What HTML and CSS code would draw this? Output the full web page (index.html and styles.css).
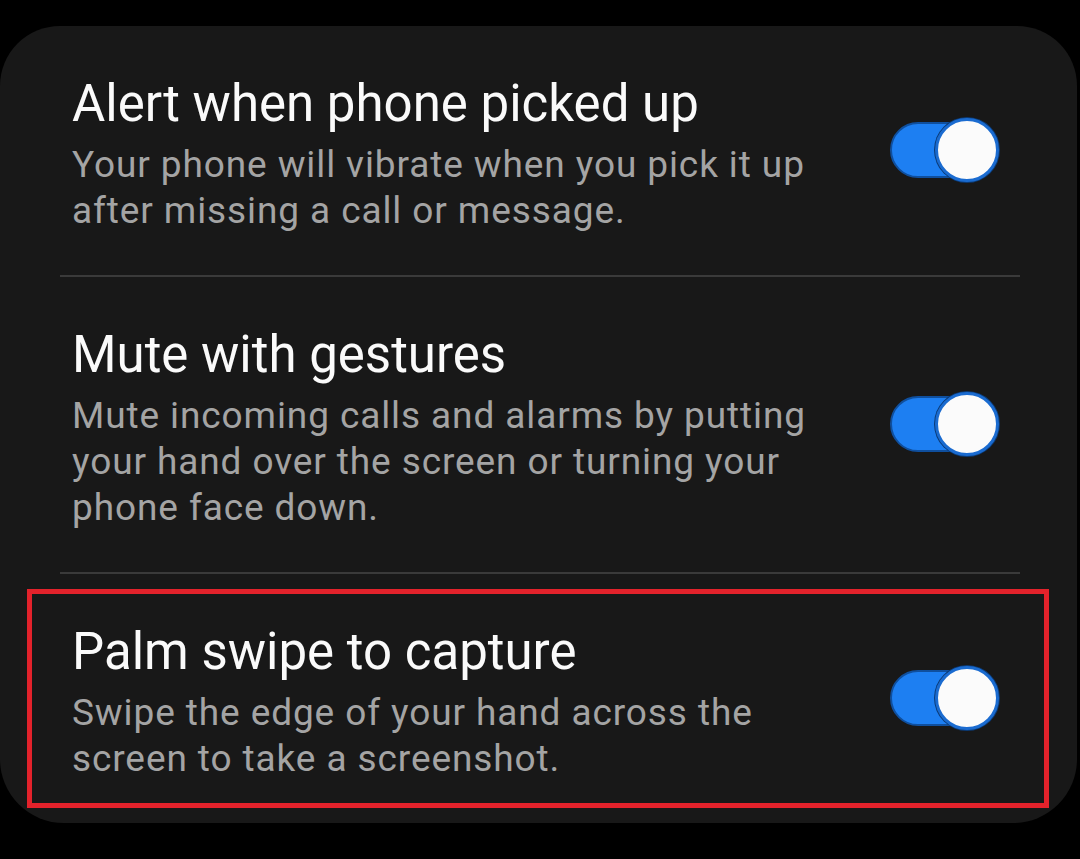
FILE: index.html
```html
<!DOCTYPE html>
<html lang="en">
<head>
<meta charset="utf-8">
<title>Motions and gestures</title>
<link rel="stylesheet" href="styles.css">
</head>
<body>
  <section class="card">
    <div class="row">
      <div class="text">
        <div class="title">Alert when phone picked up</div>
        <div class="summary">Your phone will vibrate when you pick it up<br>after missing a call or message.</div>
      </div>
      <div class="switch" role="switch" aria-checked="true"><span class="track"></span><span class="thumb"></span></div>
    </div>
    <div class="divider"></div>
    <div class="row">
      <div class="text">
        <div class="title">Mute with gestures</div>
        <div class="summary">Mute incoming calls and alarms by putting<br>your hand over the screen or turning your<br>phone face down.</div>
      </div>
      <div class="switch" role="switch" aria-checked="true"><span class="track"></span><span class="thumb"></span></div>
    </div>
    <div class="divider"></div>
    <div class="row row-marked">
      <div class="text">
        <div class="title">Palm swipe to capture</div>
        <div class="summary">Swipe the edge of your hand across the<br>screen to take a screenshot.</div>
      </div>
      <div class="switch" role="switch" aria-checked="true"><span class="track"></span><span class="thumb"></span></div>
    </div>
  </section>
</body>
</html>
```

FILE: styles.css
```css
html, body {
  margin: 0;
  padding: 0;
  background: #000;
}

body {
  font-family: Roboto, "Noto Sans", "Liberation Sans", sans-serif;
  height: 859px;
  overflow: hidden;
}

.card {
  margin-top: 26px;
  width: 1077px;
  background: #181818;
  border-radius: 60px 60px 64px 64px;
}

.row {
  position: relative;
  display: flex;
  align-items: center;
  padding: 48px 78px 41px 72px;
}

.text {
  flex: 1;
  min-width: 0;
  white-space: nowrap;
}

.title {
  color: #fafafa;
  font-size: 51px;
  line-height: 60px;
  margin-bottom: 8px;
}

.summary {
  color: #a4a4a4;
  font-size: 37px;
  letter-spacing: 0.9px;
  line-height: 46px;
}

.divider {
  height: 2px;
  background: #3a3a3a;
  margin: 0 57px 0 60px;
}

/* on-state switch: pill track with the knob resting on its right end */
.switch {
  position: relative;
  flex: none;
  width: 109px;
  height: 64px;
  margin-bottom: 8px;
}

.track {
  position: absolute;
  left: 0;
  top: 4px;
  width: 96px;
  height: 56px;
  box-sizing: border-box;
  border-radius: 28px;
  background: #1d7ff2;
  border: 2px solid #0f4f9e;
}

.thumb {
  position: absolute;
  right: 0;
  top: 0;
  width: 64px;
  height: 64px;
  box-sizing: border-box;
  border-radius: 50%;
  background: #fbfbfb;
  border: 3px solid #1a6bd0;
  box-shadow: 0 0 0 1px #0b3a75;
}

/* highlight frame drawn around the last option */
.row-marked::after {
  content: "";
  position: absolute;
  top: 15px;
  bottom: 15px;
  left: 27px;
  right: 28px;
  border: 5px solid #e3222b;
  pointer-events: none;
}
```
